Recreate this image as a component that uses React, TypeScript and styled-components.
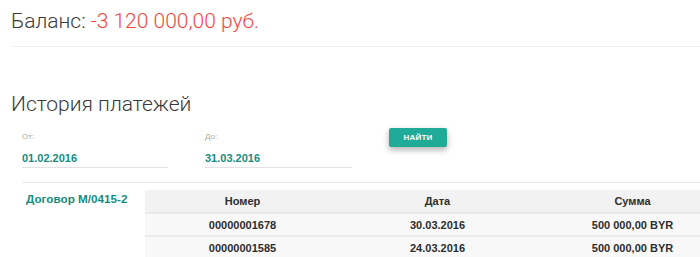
import React from "react";
import styled, { createGlobalStyle } from "styled-components";

const Global = createGlobalStyle`
  html, body { margin: 0; padding: 0; background: #fff; overflow: hidden; }
  body { font-family: "Liberation Sans", Arial, sans-serif; }
`;

const Page = styled.div`
  width: 700px;
  height: 257px;
  overflow: hidden;
  padding-top: 8px;
  box-sizing: border-box;
`;

const Balance = styled.h1`
  margin: 0 0 0 11px;
  font-family: Roboto, sans-serif;
  font-weight: 300;
  font-size: 21px;
  line-height: 26px;
  color: #3a3a3a;
  white-space: nowrap;
`;

const Negative = styled.span`
  color: #f6473e;
`;

const Rule = styled.div`
  margin: 12px 0 0 10px;
  height: 1px;
  background: #f1f1f1;
`;

const Title = styled.h2`
  margin: 44px 0 0 11px;
  font-family: Roboto, sans-serif;
  font-weight: 300;
  font-size: 21px;
  line-height: 26px;
  color: #3a3a3a;
`;

const Filters = styled.div`
  display: flex;
  align-items: flex-start;
  gap: 37px;
  margin: 15px 0 0 22px;
`;

const Field = styled.label`
  display: flex;
  flex-direction: column;
  width: ${(p: { $w: number }) => p.$w}px;
`;

const FieldLabel = styled.span`
  font-size: 8px;
  line-height: 10px;
  color: #a8a8a8;
`;

const FieldValue = styled.span`
  margin-top: 10px;
  font-size: 11px;
  font-weight: bold;
  line-height: 13px;
  color: #178c7e;
  padding-bottom: 2px;
  border-bottom: 1px solid #e2e2e2;
`;

const Button = styled.button`
  margin-top: -4px;
  width: 58px;
  height: 19px;
  border: none;
  border-radius: 2px;
  background: #1fab97;
  color: #fff;
  font-family: "Liberation Sans", Arial, sans-serif;
  font-weight: bold;
  font-size: 8px;
  letter-spacing: 0.2px;
  padding: 0;
  box-shadow: 0 3px 6px rgba(0, 0, 0, 0.3);
`;

const Divider = styled.div`
  margin: 14px 0 0 22px;
  height: 1px;
  background: #e6e6e6;
`;

const Contract = styled.div`
  display: flex;
  align-items: flex-start;
  margin-top: 7px;
`;

const ContractName = styled.div`
  flex: none;
  width: 119px;
  padding-left: 26px;
  padding-top: 2px;
  font-size: 11.7px;
  font-weight: bold;
  line-height: 14px;
  color: #178c7e;
  white-space: nowrap;
`;

const Table = styled.table`
  flex: none;
  width: 585px;
  border-collapse: collapse;
  table-layout: fixed;
  font-size: 11px;
  font-weight: bold;
  color: #2d2d2d;
`;

const Head = styled.th`
  height: 22px;
  padding: 0;
  background: #f2f2f2;
  font-weight: bold;
  text-align: center;
  border-bottom: 2px solid #e9e9e9;
`;

const Cell = styled.td`
  height: 21px;
  padding: 0;
  background: #f8f8f8;
  text-align: center;
  border-bottom: 2px solid #ececec;
`;

const rows = [
  ["00000001678", "30.03.2016", "500 000,00 BYR"],
  ["00000001585", "24.03.2016", "500 000,00 BYR"],
];

export default function App() {
  return (
    <Page>
      <Global />
      <Balance>
        Баланс: <Negative>-3 120 000,00 руб.</Negative>
      </Balance>
      <Rule />
      <Title>История платежей</Title>
      <Filters>
        <Field $w={146}>
          <FieldLabel>От:</FieldLabel>
          <FieldValue>01.02.2016</FieldValue>
        </Field>
        <Field $w={147}>
          <FieldLabel>До:</FieldLabel>
          <FieldValue>31.03.2016</FieldValue>
        </Field>
        <Button>НАЙТИ</Button>
      </Filters>
      <Divider />
      <Contract>
        <ContractName>Договор М/0415-2</ContractName>
        <Table>
          <thead>
            <tr>
              <Head>Номер</Head>
              <Head>Дата</Head>
              <Head>Сумма</Head>
            </tr>
          </thead>
          <tbody>
            {rows.map((r) => (
              <tr key={r[0]}>
                {r.map((c, i) => (
                  <Cell key={i}>{c}</Cell>
                ))}
              </tr>
            ))}
          </tbody>
        </Table>
      </Contract>
    </Page>
  );
}
